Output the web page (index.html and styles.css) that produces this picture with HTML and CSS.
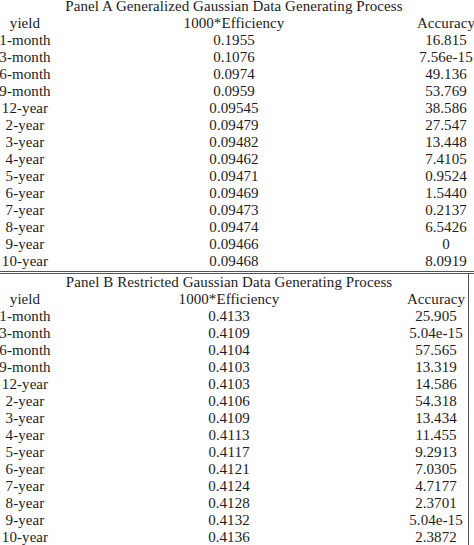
FILE: index.html
```html
<!DOCTYPE html>
<html>
<head>
<meta charset="utf-8">
<link rel="stylesheet" href="styles.css">
</head>
<body>
<div class="page">
  <section class="panel panel-a">
    <div class="title">Panel A Generalized Gaussian Data Generating Process</div>
    <div class="grid">
      <div class="c">yield</div><div class="c">1000*Efficiency</div><div class="c">Accuracy</div>
      <div class="c">1-month</div><div class="c">0.1955</div><div class="c">16.815</div>
      <div class="c">3-month</div><div class="c">0.1076</div><div class="c">7.56e-15</div>
      <div class="c">6-month</div><div class="c">0.0974</div><div class="c">49.136</div>
      <div class="c">9-month</div><div class="c">0.0959</div><div class="c">53.769</div>
      <div class="c">12-year</div><div class="c">0.09545</div><div class="c">38.586</div>
      <div class="c">2-year</div><div class="c">0.09479</div><div class="c">27.547</div>
      <div class="c">3-year</div><div class="c">0.09482</div><div class="c">13.448</div>
      <div class="c">4-year</div><div class="c">0.09462</div><div class="c">7.4105</div>
      <div class="c">5-year</div><div class="c">0.09471</div><div class="c">0.9524</div>
      <div class="c">6-year</div><div class="c">0.09469</div><div class="c">1.5440</div>
      <div class="c">7-year</div><div class="c">0.09473</div><div class="c">0.2137</div>
      <div class="c">8-year</div><div class="c">0.09474</div><div class="c">6.5426</div>
      <div class="c">9-year</div><div class="c">0.09466</div><div class="c">0</div>
      <div class="c">10-year</div><div class="c">0.09468</div><div class="c">8.0919</div>
    </div>
  </section>
  <section class="panel panel-b">
    <div class="title">Panel B Restricted Gaussian Data Generating Process</div>
    <div class="grid">
      <div class="c">yield</div><div class="c">1000*Efficiency</div><div class="c">Accuracy</div>
      <div class="c">1-month</div><div class="c">0.4133</div><div class="c">25.905</div>
      <div class="c">3-month</div><div class="c">0.4109</div><div class="c">5.04e-15</div>
      <div class="c">6-month</div><div class="c">0.4104</div><div class="c">57.565</div>
      <div class="c">9-month</div><div class="c">0.4103</div><div class="c">13.319</div>
      <div class="c">12-year</div><div class="c">0.4103</div><div class="c">14.586</div>
      <div class="c">2-year</div><div class="c">0.4106</div><div class="c">54.318</div>
      <div class="c">3-year</div><div class="c">0.4109</div><div class="c">13.434</div>
      <div class="c">4-year</div><div class="c">0.4113</div><div class="c">11.455</div>
      <div class="c">5-year</div><div class="c">0.4117</div><div class="c">9.2913</div>
      <div class="c">6-year</div><div class="c">0.4121</div><div class="c">7.0305</div>
      <div class="c">7-year</div><div class="c">0.4124</div><div class="c">4.7177</div>
      <div class="c">8-year</div><div class="c">0.4128</div><div class="c">2.3701</div>
      <div class="c">9-year</div><div class="c">0.4132</div><div class="c">5.04e-15</div>
      <div class="c">10-year</div><div class="c">0.4136</div><div class="c">2.3872</div>
    </div>
  </section>
</div>
</body>
</html>
```
FILE: styles.css
```css
html, body {
  margin: 0;
  padding: 0;
  background: #ffffff;
}
body {
  width: 474px;
  height: 545px;
  overflow: hidden;
  font-family: "Liberation Serif", "DejaVu Serif", serif;
  font-size: 15px;
  letter-spacing: 0.08px;
  line-height: 17px;
  color: #1c1c1c;
}
.page {
  margin-top: -2px;
}
.panel {
  white-space: nowrap;
}
.title {
  display: flex;
  justify-content: center;
}
.grid {
  display: grid;
  grid-auto-rows: 17px;
}
.c {
  display: flex;
  justify-content: center;
}
.panel-a .title {
  width: 468px;
}
.panel-a .grid {
  grid-template-columns: 50px 368px 56px;
}
.panel-b {
  margin-top: 1px;
  border-top: 3px double #555555;
}
.panel-b .title,
.panel-b .grid {
  border-right: 1px solid #555555;
}
.panel-b .title {
  width: 458px;
  padding-right: 10px;
}
.panel-b .grid {
  width: 468px;
  grid-template-columns: 50px 358px 56px;
}
```
